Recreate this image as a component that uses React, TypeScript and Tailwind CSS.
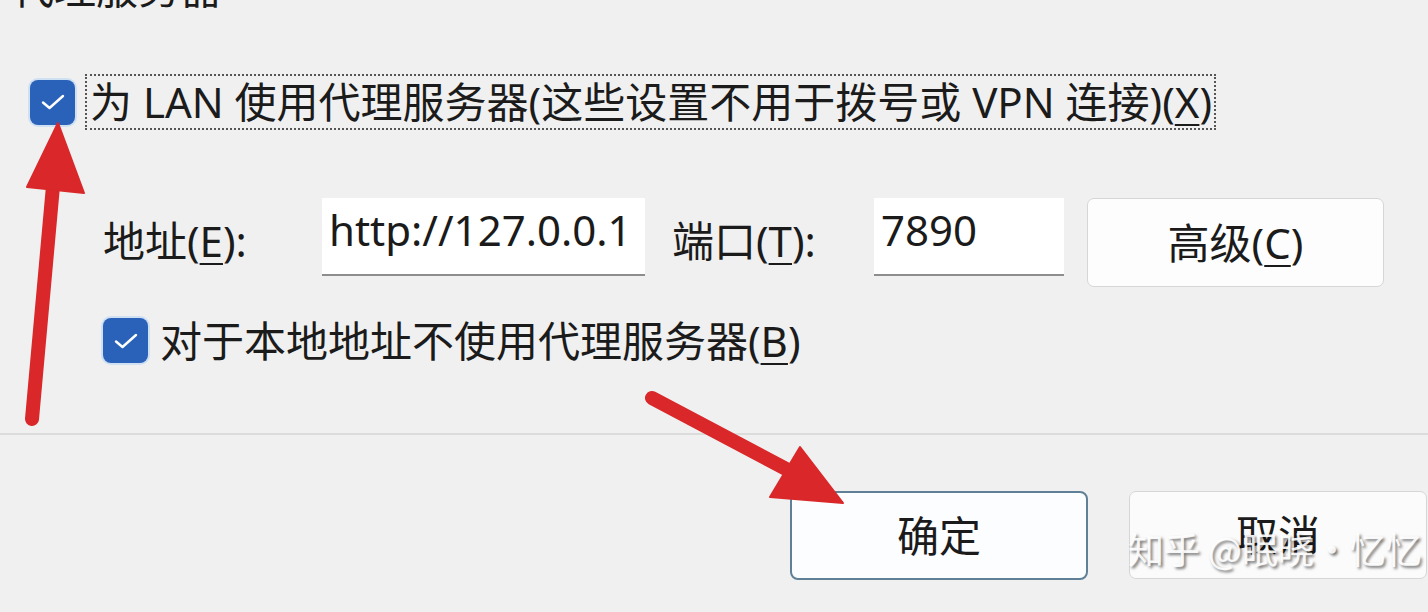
import React from 'react';

const font = "font-['Noto_Sans','Noto_Sans_CJK_SC',sans-serif]";

const Key: React.FC<{ k: string }> = ({ k }) => (
  <span className="underline decoration-[2px] underline-offset-[6px]">{k}</span>
);

const CheckBox: React.FC = () => (
  <div className="w-[45px] h-[45px] shrink-0 rounded-[8px] bg-[#2a62b9] ring-2 ring-[#cfe0f3] flex items-center justify-center">
    <svg width="24" height="16" viewBox="0 0 24 16" fill="none">
      <path d="M2 8.5 L8.5 14 L22 2" stroke="#ffffff" strokeWidth="2.4" strokeLinecap="round" strokeLinejoin="round" />
    </svg>
  </div>
);

export default function App() {
  return (
    <div className={`relative w-[1428px] h-[612px] overflow-hidden bg-[#f0f0f0] text-[#1b1b1b] ${font}`}>
      {/* group heading, scrolled mostly out of view */}
      <div className="text-[42px] leading-[42px] ml-[12px] mt-[-33px]">代理服务器</div>

      {/* use proxy for LAN */}
      <div className="flex items-center mt-[65px] ml-[30px] gap-[10px]">
        <CheckBox />
        <div className="border-2 border-dotted border-[#555] h-[56px] flex items-center pl-[3px] pr-[2px] text-[42px] leading-none whitespace-nowrap">
          为 LAN 使用代理服务器(这些设置不用于拨号或 VPN 连接)(<Key k="X" />)
        </div>
      </div>

      {/* address / port row */}
      <div className="flex items-start mt-[68px] ml-[103px] text-[42px] leading-none whitespace-nowrap">
        <div className="w-[219px] pt-[22px]">
          地址(<Key k="E" />):
        </div>
        <div className="w-[323px] h-[78px] bg-white border-b-2 border-[#8d8d8d] pl-[7px] pt-[11px]">
          http://127.0.0.1
        </div>
        <div className="w-[229px] pl-[27px] pt-[22px]">
          端口(<Key k="T" />):
        </div>
        <div className="w-[190px] h-[78px] bg-white border-b-2 border-[#8d8d8d] pl-[7px] pt-[11px]">
          7890
        </div>
        <button className="ml-[23px] w-[297px] h-[89px] bg-[#fdfdfd] border border-[#d6d6d6] rounded-[7px] flex items-center justify-center text-[42px] leading-none">
          高级(<Key k="C" />)
        </button>
      </div>

      {/* bypass for local addresses */}
      <div className="flex items-center mt-[31px] ml-[103px] gap-[12px] text-[42px] leading-none whitespace-nowrap">
        <CheckBox />
        <div>
          对于本地地址不使用代理服务器(<Key k="B" />)
        </div>
      </div>

      <div className="mt-[70px] h-[2px] bg-[#dcdcdc]" />

      {/* dialog buttons */}
      <div className="flex mt-[56px] ml-[790px] gap-[41px]">
        <button className="shrink-0 w-[298px] h-[89px] bg-[#fbfdff] border-2 border-[#5f8096] rounded-[8px] flex items-center justify-center text-[42px] leading-none">
          确定
        </button>
        <button className="shrink-0 w-[298px] h-[88px] bg-[#fbfbfb] border border-[#d6d6d6] rounded-[7px] flex items-center justify-center text-[42px] leading-none">
          取消
        </button>
      </div>

      {/* watermark */}
      <div className="absolute left-[1128px] top-[530px] text-[36px] leading-none text-white/90 whitespace-nowrap [text-shadow:2px_2px_3px_rgba(0,0,0,0.55)] font-['Noto_Sans_CJK_SC',sans-serif]">
        知乎 @眠晓·忆忆
      </div>

      {/* red annotation arrows */}
      <svg className="absolute inset-0 pointer-events-none" width="1428" height="612" viewBox="0 0 1428 612">
        <g fill="#d9272a" stroke="#d9272a">
          <line x1="32" y1="419" x2="53" y2="186" strokeWidth="14" strokeLinecap="round" />
          <polygon points="58,123 84,193 27,187" strokeWidth="2" strokeLinejoin="round" />
          <line x1="652" y1="398" x2="788" y2="470" strokeWidth="14" strokeLinecap="round" />
          <polygon points="843,503 770,497 800,447" strokeWidth="2" strokeLinejoin="round" />
        </g>
      </svg>
    </div>
  );
}
